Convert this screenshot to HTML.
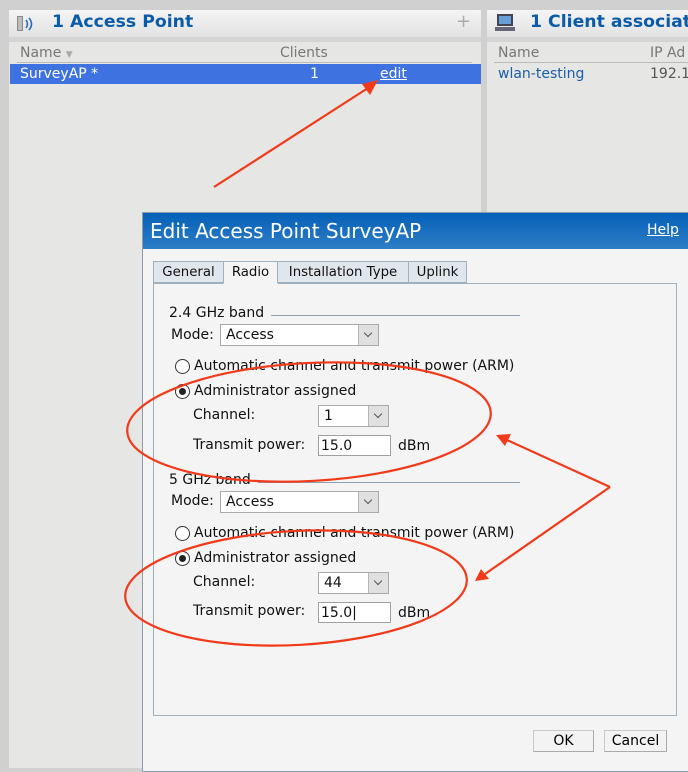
<!DOCTYPE html>
<html><head><meta charset="utf-8"><style>
*{margin:0;padding:0;box-sizing:border-box}
body{width:688px;height:768px;overflow:hidden;background:#d0d0d0;font-family:"DejaVu Sans","Liberation Sans",sans-serif;position:relative}
.a{position:absolute;white-space:nowrap}
.t{position:absolute;font-size:14px;color:#111;white-space:nowrap}
.sel{position:absolute;background:#fff;border:1px solid #a9a9a9;height:22px;font-size:14px;padding:2px 5px;color:#111}
.sel i{position:absolute;right:0;top:0;width:20px;height:20px;background:#e0e0e0;border-left:1px solid #b5b5b5}
.sel i:after{content:"";position:absolute;left:6px;top:5px;width:5px;height:5px;border-right:1px solid #555;border-bottom:1px solid #555;transform:rotate(45deg)}
.inp{position:absolute;background:#fff;border:1px solid #a0a0a0;height:21px;font-size:14px;padding:2px 2px;color:#111}
.rad{position:absolute;width:15px;height:15px;border:1px solid #333;border-radius:50%;background:#fff}
.rad.on:after{content:"";position:absolute;left:3px;top:3px;width:7px;height:7px;border-radius:50%;background:#222}
.tab{position:absolute;top:261px;height:22px;border:1px solid #9fb0bf;background:#dfe6ec;font-size:13.3px;padding:3px 0;text-align:center;color:#111;white-space:nowrap}
.btn{position:absolute;height:22px;background:#f3f3f3;border:1px solid #c9c9c9;border-bottom-color:#aaa;border-right-color:#aaa;font-size:14px;text-align:center;padding-top:2px}
</style></head><body>
<div class="a" style="left:9px;top:0;width:472px;height:768px;background:#e6e6e4"></div>
<div class="a" style="left:487px;top:0;width:201px;height:768px;background:#e6e6e4"></div>
<div class="a" style="left:9px;top:10px;width:472px;height:27px;background:linear-gradient(#f4f4f4,#e2e2e2)"></div>
<div class="a" style="left:487px;top:10px;width:201px;height:27px;background:linear-gradient(#f4f4f4,#e2e2e2)"></div>
<div class="a" style="left:0;top:0;width:688px;height:10px;background:#d0d0d0"></div>
<div class="a" style="left:9px;top:37px;width:472px;height:5px;background:#d4d4d4"></div>
<div class="a" style="left:487px;top:37px;width:201px;height:5px;background:#d4d4d4"></div>
<svg class="a" style="left:16px;top:13px" width="22" height="20"><rect x="1" y="3" width="6" height="15" fill="#8a8a8a"/><rect x="2" y="4" width="4" height="13" fill="#bdbdbd"/><path d="M10 7 q3 4 0 8 M13 5 q5 6 0 12" stroke="#2a6ab8" stroke-width="1.6" fill="none"/></svg>
<div class="a" style="left:52px;top:12px;font-size:17.3px;font-weight:bold;color:#0b5ba8">1 Access Point</div>
<div class="a" style="left:456px;top:11px;font-size:18px;color:#aaa">+</div>
<svg class="a" style="left:494px;top:13px" width="24" height="20"><rect x="3" y="1" width="16" height="12" fill="#445"/><rect x="5" y="3" width="12" height="8" fill="#6a9ed8"/><rect x="1" y="14" width="20" height="4" fill="#667"/></svg>
<div class="a" style="left:530px;top:12px;font-size:17.3px;font-weight:bold;color:#0b5ba8">1 Client associat</div>
<div class="t" style="left:20px;top:45px;color:#777">Name <span style="font-size:9px;color:#aaa">▼</span></div>
<div class="t" style="left:280px;top:45px;color:#777">Clients</div>
<div class="a" style="left:17px;top:62px;width:455px;height:1px;background:#bbb"></div>
<div class="a" style="left:10px;top:64px;width:471px;height:20px;background:#3d72e0"></div>
<div class="t" style="left:20px;top:66px;color:#fff">SurveyAP *</div>
<div class="t" style="left:310px;top:66px;color:#fff">1</div>
<div class="t" style="left:380px;top:66px;color:#fff;text-decoration:underline">edit</div>
<div class="t" style="left:498px;top:45px;color:#777">Name</div>
<div class="t" style="left:650px;top:45px;color:#777">IP Ad</div>
<div class="a" style="left:494px;top:62px;width:194px;height:1px;background:#bbb"></div>
<div class="t" style="left:498px;top:66px;color:#1a5ea8">wlan-testing</div>
<div class="t" style="left:650px;top:66px;color:#555">192.1</div>

<div class="a" style="left:142px;top:212px;width:550px;height:560px;background:#f4f4f4;border:1px solid #8d9cab"></div>
<div class="a" style="left:143px;top:213px;width:545px;height:36px;background:linear-gradient(#0560b8,#2e7dc6)"></div>
<div class="a" style="left:150px;top:219px;font-size:20px;color:#fff">Edit Access Point SurveyAP</div>
<div class="t" style="left:647px;top:222px;color:#fff;text-decoration:underline">Help</div>
<div class="a" style="left:153px;top:283px;width:524px;height:433px;border:1px solid #9fb0bf;background:#f4f4f4"></div>
<div class="tab" style="left:153px;width:71px">General</div>
<div class="tab" style="left:223px;width:55px;background:#f4f4f4;border-bottom-color:#f4f4f4;height:23px">Radio</div>
<div class="tab" style="left:277px;width:132px">Installation Type</div>
<div class="tab" style="left:408px;width:59px">Uplink</div>

<div class="t" style="left:169px;top:305px">2.4 GHz band</div>
<div class="a" style="left:271px;top:315px;width:249px;height:1px;background:#8fa0b0"></div>
<div class="t" style="left:171px;top:327px">Mode:</div>
<div class="sel" style="left:220px;top:324px;width:159px">Access<i></i></div>
<div class="rad" style="left:175px;top:359px"></div>
<div class="t" style="left:194px;top:358px">Automatic channel and transmit power (ARM)</div>
<div class="rad on" style="left:175px;top:384px"></div>
<div class="t" style="left:194px;top:383px">Administrator assigned</div>
<div class="t" style="left:193px;top:407px">Channel:</div>
<div class="sel" style="left:318px;top:405px;width:71px">1<i></i></div>
<div class="t" style="left:193px;top:437px">Transmit power:</div>
<div class="inp" style="left:318px;top:435px;width:73px">15.0</div>
<div class="t" style="left:398px;top:438px">dBm</div>

<div class="t" style="left:169px;top:472px">5 GHz band</div>
<div class="a" style="left:258px;top:482px;width:262px;height:1px;background:#8fa0b0"></div>
<div class="t" style="left:171px;top:493px">Mode:</div>
<div class="sel" style="left:220px;top:491px;width:159px">Access<i></i></div>
<div class="rad" style="left:175px;top:526px"></div>
<div class="t" style="left:194px;top:525px">Automatic channel and transmit power (ARM)</div>
<div class="rad on" style="left:175px;top:551px"></div>
<div class="t" style="left:194px;top:550px">Administrator assigned</div>
<div class="t" style="left:193px;top:574px">Channel:</div>
<div class="sel" style="left:318px;top:572px;width:71px">44<i></i></div>
<div class="t" style="left:193px;top:603px">Transmit power:</div>
<div class="inp" style="left:318px;top:602px;width:73px">15.0|</div>
<div class="t" style="left:398px;top:605px">dBm</div>

<div class="btn" style="left:533px;top:730px;width:61px">OK</div>
<div class="btn" style="left:604px;top:730px;width:63px">Cancel</div>

<svg class="a" style="left:0;top:0" width="688" height="768">
<g stroke="#f03a1a" stroke-width="2.2" fill="none">
<ellipse cx="309" cy="422" rx="182" ry="59" transform="rotate(-3 309 422)"/>
<ellipse cx="296" cy="588" rx="171" ry="57" transform="rotate(-3 296 588)"/>
<line x1="214" y1="187" x2="368" y2="88"/>
<line x1="610" y1="487" x2="507" y2="440"/>
<line x1="610" y1="487" x2="485" y2="574"/>
</g>
<g fill="#f03a1a">
<polygon points="378,80 362,84 370,95"/>
<polygon points="496,435 505,446 511,434"/>
<polygon points="475,581 481,569 489,579"/>
</g>
</svg>
</body></html>
